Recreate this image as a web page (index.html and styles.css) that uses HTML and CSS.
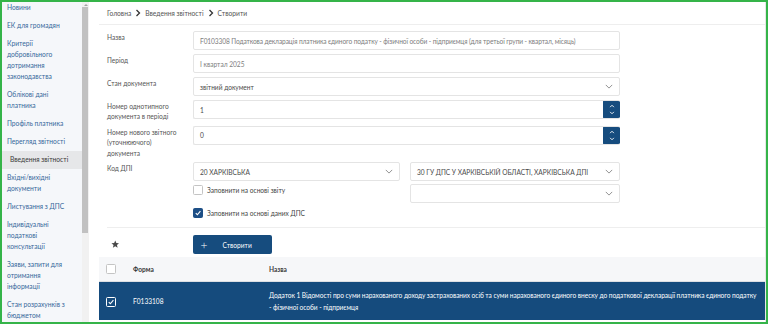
FILE: index.html
```html
<!DOCTYPE html>
<html lang="uk">
<head>
  <meta charset="UTF-8" />
  <title>Введення звітності - Створити</title>
  <link rel="stylesheet" href="styles.css">
</head>

<body>

  <!-- Бокове меню -->
  <aside class="sidebar">
    <ul class="nav">
      <li>Новини</li>
      <li>ЕК для громадян</li>
      <li>Критерії добровільного дотримання законодавства</li>
      <li>Облікові дані платника</li>
      <li>Профіль платника</li>
      <li>Перегляд звітності</li>
      <li class="active">Введення звітності</li>
      <li>Вхідні/вихідні документи</li>
      <li>Листування з ДПС</li>
      <li>Індивідуальні податкові консультації</li>
      <li>Заяви, запити для отримання інформації</li>
      <li>Стан розрахунків з бюджетом</li>
    </ul>
    <div class="scrollbar">
      <span class="scroll-arrow"></span>
      <span class="scroll-thumb"></span>
    </div>
  </aside>

  <main class="main">

    <nav class="breadcrumb">
      <span>Головна</span>
      <svg class="crumb-sep" viewBox="0 0 6 8"><path d="M1.5 1 L4.5 4 L1.5 7" /></svg>
      <span>Введення звітності</span>
      <svg class="crumb-sep" viewBox="0 0 6 8"><path d="M1.5 1 L4.5 4 L1.5 7" /></svg>
      <span>Створити</span>
    </nav>

    <form class="report-form">

      <div class="form-row">
        <label>Назва</label>
        <div class="field muted long">F0103308 Податкова декларація платника єдиного податку - фізичної особи - підприємця (для третьої групи - квартал, місяць)</div>
      </div>

      <div class="form-row">
        <label>Період</label>
        <div class="field muted">I квартал 2025</div>
      </div>

      <div class="form-row">
        <label>Стан документа</label>
        <div class="field select">
          <span>звітний документ</span>
          <svg class="chevron" viewBox="0 0 10 6"><path d="M1 1 L5 5 L9 1" /></svg>
        </div>
      </div>

      <div class="form-row">
        <label>Номер однотипного документа в періоді</label>
        <div class="field number">
          <span>1</span>
          <span class="spinner">
            <svg viewBox="0 0 8 5"><path d="M1.5 4 L4 1.5 L6.5 4" /></svg>
            <svg viewBox="0 0 8 5"><path d="M1.5 1 L4 3.5 L6.5 1" /></svg>
          </span>
        </div>
      </div>

      <div class="form-row">
        <label>Номер нового звітного (уточнюючого) документа</label>
        <div class="field number">
          <span>0</span>
          <span class="spinner">
            <svg viewBox="0 0 8 5"><path d="M1.5 4 L4 1.5 L6.5 4" /></svg>
            <svg viewBox="0 0 8 5"><path d="M1.5 1 L4 3.5 L6.5 1" /></svg>
          </span>
        </div>
      </div>

      <div class="form-row">
        <label>Код ДПІ</label>
        <div class="dpi-grid">
          <div class="dpi-col">
            <div class="field select">
              <span>20 ХАРКІВСЬКА</span>
              <svg class="chevron" viewBox="0 0 10 6"><path d="M1 1 L5 5 L9 1" /></svg>
            </div>
            <div class="check-row">
              <span class="checkbox"></span>
              <span>Заповнити на основі звіту</span>
            </div>
            <div class="check-row">
              <span class="checkbox checked">
                <svg viewBox="0 0 10 10"><path d="M2.2 5.2 L4.2 7.2 L8 2.8" /></svg>
              </span>
              <span>Заповнити на основі даних ДПС</span>
            </div>
          </div>
          <div class="dpi-col">
            <div class="field select">
              <span>30 ГУ ДПС У ХАРКІВСЬКІЙ ОБЛАСТІ, ХАРКІВСЬКА ДПІ</span>
              <svg class="chevron" viewBox="0 0 10 6"><path d="M1 1 L5 5 L9 1" /></svg>
            </div>
            <div class="field select">
              <span></span>
              <svg class="chevron" viewBox="0 0 10 6"><path d="M1 1 L5 5 L9 1" /></svg>
            </div>
          </div>
        </div>
      </div>

    </form>

    <div class="toolbar">
      <svg class="star" viewBox="0 0 10 10"><path d="M5 0.6 L6.3 3.6 L9.5 3.8 L7 5.9 L7.8 9.2 L5 7.4 L2.2 9.2 L3 5.9 L0.5 3.8 L3.7 3.6 Z" /></svg>
      <button type="button" class="btn-create"><span class="plus">+</span>Створити</button>
    </div>

    <table class="forms-table">
      <thead>
        <tr>
          <th class="col-check"><span class="checkbox"></span></th>
          <th class="col-form">Форма</th>
          <th>Назва</th>
        </tr>
      </thead>
      <tbody>
        <tr class="selected">
          <td class="col-check">
            <span class="checkbox white">
              <svg viewBox="0 0 10 10"><path d="M2.2 5.2 L4.2 7.2 L8 2.8" /></svg>
            </span>
          </td>
          <td class="col-form">F0133108</td>
          <td class="col-name">Додаток 1 Відомості про суми нарахованого доходу застрахованих осіб та суми нарахованого єдиного внеску до податкової декларації платника єдиного податку<br>- фізичної особи - підприємця</td>
        </tr>
      </tbody>
    </table>

  </main>

</body>
</html>
```

FILE: styles.css
```css
/* --- БАЗА --- */
html, body {
  height: 100%;
}

body {
  margin: 0;
  box-sizing: border-box;
  border: 2px solid #35b449;
  display: flex;
  overflow: hidden;
  background: #fff;
  font-family: Lato, Roboto, sans-serif;
  color: #444;
}

/* --- БОКОВЕ МЕНЮ --- */
.sidebar {
  display: flex;
  flex-shrink: 0;
}

.nav {
  width: 80px;
  margin: -3.5px 0 0;
  padding: 0;
  list-style: none;
  background: #f5f7fa;
}

.nav li {
  padding: 3.5px 9px 3.5px 5px;
  font-size: 6.7px;
  line-height: 11px;
  color: #35689b;
}

.nav li.active {
  background: #e6e7e9;
  color: #3a3a3a;
  padding-left: 8px;
}

.scrollbar {
  width: 7px;
  background: #f1f1f1;
  display: flex;
  flex-direction: column;
  align-items: flex-start;
}

.scroll-arrow {
  width: 0;
  height: 0;
  margin: 2px 0 0 1.5px;
  border-left: 2px solid transparent;
  border-right: 2px solid transparent;
  border-bottom: 2.5px solid #a3a3a3;
}

.scroll-thumb {
  width: 6px;
  height: 226px;
  margin-top: 1px;
  background: #c1c1c1;
}

/* --- ОСНОВНА ЧАСТИНА --- */
.main {
  flex: 1;
  margin-left: 10px;
  border-right: 1px solid #e6e6e6;
  min-width: 0;
}

.breadcrumb {
  height: 22px;
  display: flex;
  align-items: center;
  gap: 4px;
  padding-left: 8px;
  border-bottom: 1px solid #eeeeee;
  font-size: 6.7px;
  color: #555;
}

.crumb-sep {
  width: 6px;
  height: 8px;
  fill: none;
  stroke: #333;
  stroke-width: 1.3;
}

.report-form {
  padding: 6px 0 0 8px;
}

.form-row {
  display: flex;
  align-items: flex-start;
  margin-bottom: 4px;
}

.form-row label {
  width: 86px;
  flex-shrink: 0;
  padding-top: 1px;
  padding-right: 14px;
  box-sizing: border-box;
  font-size: 6.6px;
  line-height: 10.4px;
  color: #555;
}

.field {
  width: 427px;
  height: 19px;
  box-sizing: border-box;
  border: 1px solid #e4e4e4;
  border-radius: 2px;
  display: flex;
  align-items: center;
  justify-content: space-between;
  padding-left: 6px;
  font-size: 6.6px;
  color: #4a4a4a;
  white-space: nowrap;
  overflow: hidden;
}

.field.muted {
  color: #7d7d7d;
}

.field.long {
  letter-spacing: -0.1px;
}

.field.select {
  padding-right: 6px;
}

.chevron {
  width: 8px;
  height: 5px;
  flex-shrink: 0;
  fill: none;
  stroke: #777;
  stroke-width: 1;
}

.field.number {
  border-right: none;
}

.spinner {
  width: 17px;
  height: 19px;
  background: #164c7e;
  border-radius: 2px;
  display: flex;
  flex-direction: column;
  align-items: center;
  justify-content: center;
  gap: 3px;
}

.spinner svg {
  width: 6px;
  height: 4px;
  fill: none;
  stroke: #fff;
  stroke-width: 1.2;
}

/* --- КОД ДПІ --- */
.dpi-grid {
  display: flex;
  gap: 10px;
}

.dpi-col {
  display: flex;
  flex-direction: column;
  gap: 3px;
}

.dpi-col:first-child {
  width: 207px;
}

.dpi-col:last-child {
  width: 210px;
}

.dpi-col .field {
  width: 100%;
}

.check-row {
  display: flex;
  align-items: center;
  gap: 4px;
  height: 11px;
  font-size: 6.6px;
  color: #444;
}

.check-row + .check-row {
  margin-top: 9px;
}

.checkbox {
  width: 10px;
  height: 10px;
  box-sizing: border-box;
  border: 1px solid #c4c4c4;
  border-radius: 1.5px;
  background: #fff;
  display: inline-flex;
  align-items: center;
  justify-content: center;
  flex-shrink: 0;
}

.checkbox svg {
  width: 8px;
  height: 8px;
  fill: none;
  stroke: #fff;
  stroke-width: 1.4;
}

.checkbox.checked {
  background: #1d4f86;
  border-color: #1d4f86;
}

.checkbox.white {
  background: none;
  border-color: #fff;
}

/* --- ПАНЕЛЬ КНОПОК --- */
.toolbar {
  margin: 9px 0 0 8px;
  padding-top: 7px;
  border-top: 1px solid #eeeeee;
  display: flex;
  align-items: center;
  height: 19px;
}

.star {
  width: 8.5px;
  height: 8.5px;
  margin-left: 3.5px;
  fill: #4a4a4a;
}

.btn-create {
  margin-left: 73.5px;
  width: 79px;
  height: 19px;
  border: none;
  border-radius: 2px;
  background: #164c7e;
  color: #fff;
  font-family: inherit;
  font-size: 6.6px;
  display: flex;
  align-items: center;
  padding: 0 0 0 8px;
  cursor: pointer;
}

.plus {
  font-size: 12px;
  font-weight: 300;
  line-height: 1;
  margin-right: 15px;
}

/* --- ТАБЛИЦЯ --- */
.forms-table {
  width: 100%;
  margin-top: 3px;
  border-collapse: collapse;
  font-size: 6.6px;
}

.forms-table th,
.forms-table td {
  padding: 0;
}

.forms-table th {
  height: 24px;
  background: #f6f7f9;
  border-bottom: 1px solid #dcdfe3;
  text-align: left;
  font-weight: 700;
  color: #3a3a3a;
}

.forms-table td {
  height: 38px;
  padding-right: 6px;
  line-height: 12px;
}

.forms-table .col-check {
  width: 21px;
  padding-left: 7px;
}

.col-check .checkbox {
  vertical-align: middle;
}

.forms-table .col-form {
  width: 130px;
}

.forms-table .col-name {
  letter-spacing: -0.06px;
  white-space: nowrap;
}

.forms-table tr.selected td {
  background: #154b7d;
  color: #fff;
}
```
